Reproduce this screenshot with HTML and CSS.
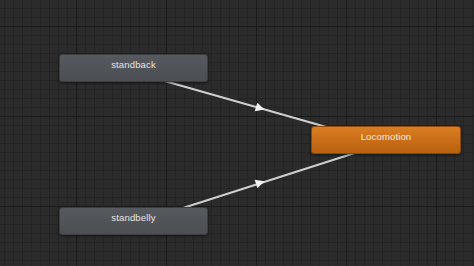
FILE: index.html
```html
<!DOCTYPE html>
<html>
<head>
<meta charset="utf-8">
<link rel="stylesheet" href="styles.css">
</head>
<body>
<div class="canvas">
  <svg class="edges" width="474" height="266" viewBox="0 0 474 266">
    <line x1="133" y1="72" x2="386" y2="144" class="edge"/>
    <line x1="133" y1="224" x2="386" y2="143" class="edge"/>
    <polygon class="arrow" points="0,-4.5 9,0 0,4.5" transform="translate(256,107) rotate(15.9)"/>
    <polygon class="arrow" points="0,-4.5 9,0 0,4.5" transform="translate(256,184) rotate(-17.8)"/>
  </svg>
  <div class="node grey n1">standback</div>
  <div class="node grey n2">standbelly</div>
  <div class="node orange n3">Locomotion</div>
</div>
</body>
</html>
```
FILE: styles.css
```css
html, body {
  margin: 0;
  padding: 0;
  background: #2a2a2a;
}
.canvas {
  position: relative;
  width: 474px;
  height: 266px;
  overflow: hidden;
  background-color: #2b2b2b;
  background-image:
    linear-gradient(to right, #1a1a1a 0 1px, transparent 1px),
    linear-gradient(to bottom, #1a1a1a 0 1px, transparent 1px),
    linear-gradient(to right, #242424 0 1px, transparent 1px),
    linear-gradient(to bottom, #242424 0 1px, transparent 1px);
  background-size: 90px 90px, 90px 90px, 9px 9px, 9px 9px;
  background-position: 76px 0, 0 26px, 4px 0, 0 8px;
  font-family: "Liberation Sans", Arial, sans-serif;
}
.edges {
  position: absolute;
  left: 0;
  top: 0;
}
.edge {
  stroke: #cfcfcf;
  stroke-width: 2;
}
.arrow {
  fill: #f2f2f2;
}
.node {
  position: absolute;
  box-sizing: border-box;
  height: 28px;
  border-radius: 3px;
  display: flex;
  justify-content: center;
  padding-top: 4px;
  font-size: 9.5px;
  letter-spacing: 0.15px;
  box-shadow: 0 1px 3px rgba(0,0,0,0.55);
}
.grey {
  width: 149px;
  background: linear-gradient(#56595d, #4b4e52);
  border: 1px solid #3c3e41;
  color: #e6e6e6;
}
.orange {
  width: 150px;
  background: linear-gradient(#db7d22, #b8600f);
  border: 1px solid #8c4a0c;
  color: #f8ead8;
}
.n1 { left: 59px; top: 54px; }
.n2 { left: 59px; top: 207px; }
.n3 { left: 311px; top: 126px; }
```
